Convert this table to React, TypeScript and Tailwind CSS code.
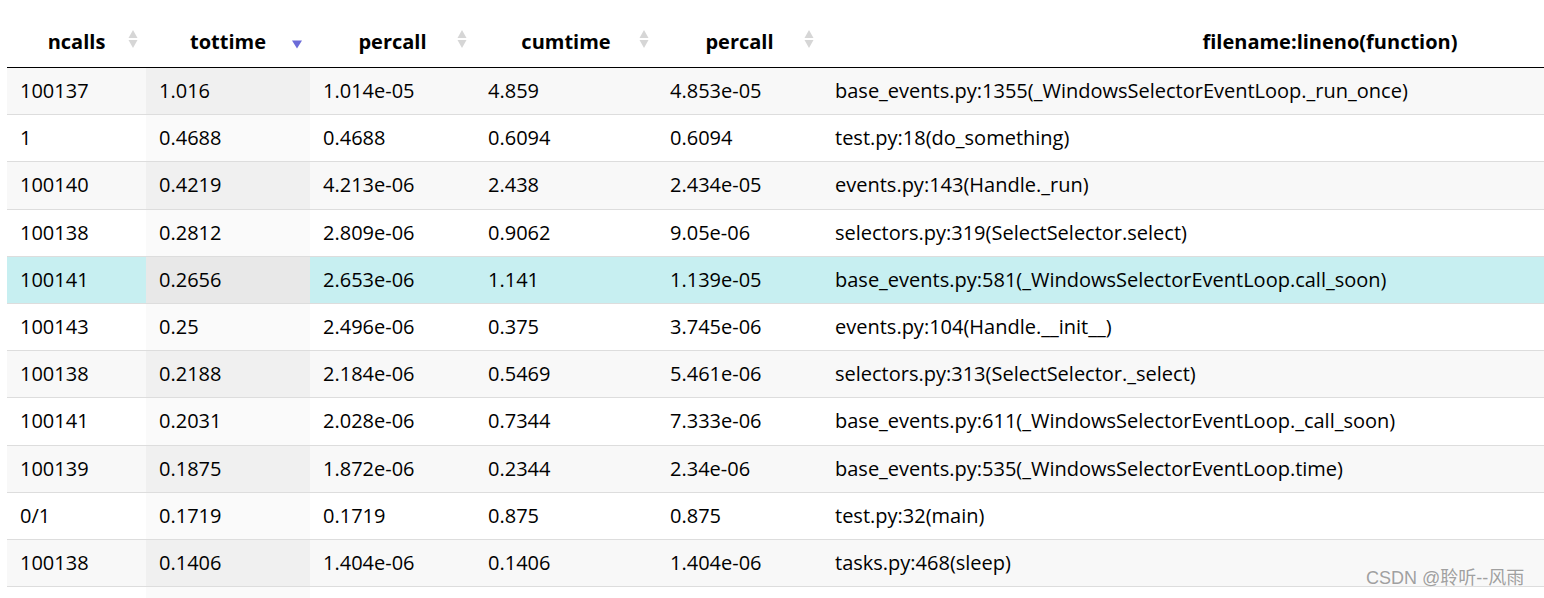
import React from "react";

const rows: string[][] = [
  ["100137", "1.016", "1.014e-05", "4.859", "4.853e-05", "base_events.py:1355(_WindowsSelectorEventLoop._run_once)"],
  ["1", "0.4688", "0.4688", "0.6094", "0.6094", "test.py:18(do_something)"],
  ["100140", "0.4219", "4.213e-06", "2.438", "2.434e-05", "events.py:143(Handle._run)"],
  ["100138", "0.2812", "2.809e-06", "0.9062", "9.05e-06", "selectors.py:319(SelectSelector.select)"],
  ["100141", "0.2656", "2.653e-06", "1.141", "1.139e-05", "base_events.py:581(_WindowsSelectorEventLoop.call_soon)"],
  ["100143", "0.25", "2.496e-06", "0.375", "3.745e-06", "events.py:104(Handle.__init__)"],
  ["100138", "0.2188", "2.184e-06", "0.5469", "5.461e-06", "selectors.py:313(SelectSelector._select)"],
  ["100141", "0.2031", "2.028e-06", "0.7344", "7.333e-06", "base_events.py:611(_WindowsSelectorEventLoop._call_soon)"],
  ["100139", "0.1875", "1.872e-06", "0.2344", "2.34e-06", "base_events.py:535(_WindowsSelectorEventLoop.time)"],
  ["0/1", "0.1719", "0.1719", "0.875", "0.875", "test.py:32(main)"],
  ["100138", "0.1406", "1.404e-06", "0.1406", "1.404e-06", "tasks.py:468(sleep)"],
  ["", "", "", "", "", ""],
];

const headers = ["ncalls", "tottime", "percall", "cumtime", "percall", "filename:lineno(function)"];
const gridCols = "grid grid-cols-[139px_164px_165px_182px_165px_1016px]";

function SortIcon({ active }: { active: boolean }) {
  if (active) {
    return (
      <svg width="10" height="20" viewBox="0 0 10 20" className="absolute right-[8px] top-[32px]">
        <polygon points="0,8.5 10,8.5 5,16.5" fill="#6b6bd8" />
      </svg>
    );
  }
  return (
    <svg width="10" height="20" viewBox="0 0 10 20" className="absolute right-[8px] top-[30px]">
      <polygon points="5,0 9.5,8 0.5,8" fill="#d6d6d6" />
      <polygon points="0.5,10 9.5,10 5,18" fill="#d6d6d6" />
    </svg>
  );
}

export default function App() {
  return (
    <div
      className="relative w-[1544px] h-[598px] overflow-hidden bg-white text-black"
      style={{ fontFamily: '"Open Sans", "Noto Sans CJK SC", sans-serif' }}
    >
      <div className="ml-[7px] w-[1831px]">
        <div className={`${gridCols} h-[68px] border-b border-black`}>
          {headers.map((h, i) => (
            <div key={i} className="relative flex items-center justify-center pt-[17px] text-[20px] font-bold">
              <span>{h}</span>
              {i < 5 && <SortIcon active={i === 1} />}
            </div>
          ))}
        </div>
        {rows.map((r, ri) => {
          const highlight = ri === 4;
          const odd = ri % 2 === 0;
          const rowBg = highlight ? "bg-[#c7eff1]" : odd ? "bg-[#f8f8f8]" : "bg-white";
          const sortBg = highlight ? "bg-[#e8e8e8]" : odd ? "bg-[#f0f0f0]" : "bg-[#fafafa]";
          return (
            <div key={ri} className={`${gridCols} h-[47.2px] border-b border-[#dddddd] ${rowBg}`}>
              {r.map((c, ci) => (
                <div
                  key={ci}
                  className={`flex items-center pl-[13px] text-[20px] whitespace-nowrap ${ci === 1 ? sortBg : ""}`}
                >
                  {c}
                </div>
              ))}
            </div>
          );
        })}
      </div>
      <div
        className="absolute left-[1366px] top-[565px] text-[18px] text-[#a0a0a0] whitespace-nowrap"
        style={{ fontFamily: '"Liberation Sans", "Noto Sans CJK SC", sans-serif', textShadow: "0 0 2px #fff" }}
      >
        CSDN @聆听--风雨
      </div>
    </div>
  );
}
